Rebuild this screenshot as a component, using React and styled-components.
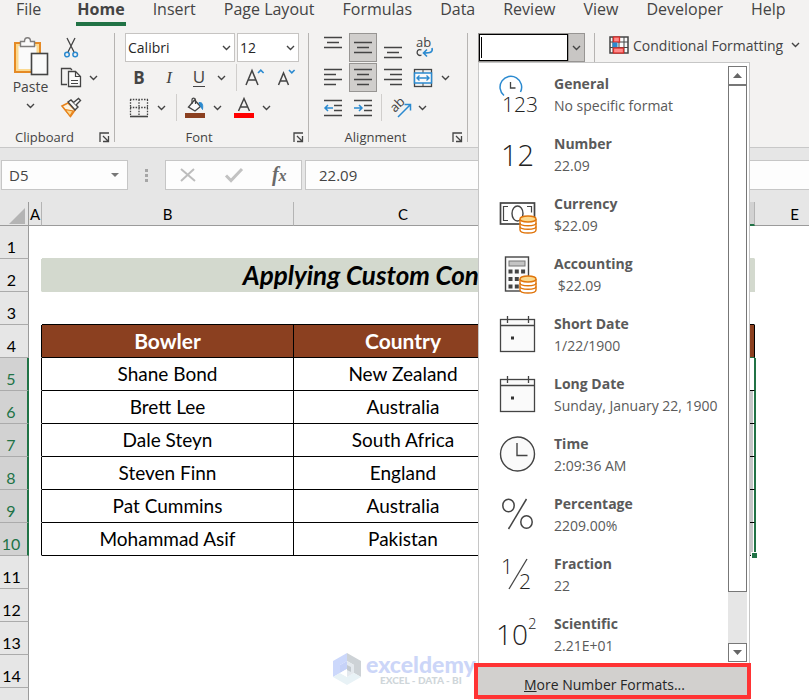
import React from 'react'

import styled, { createGlobalStyle } from 'styled-components'


const ui = `'Open Sans', 'Noto Sans', sans-serif`
const sheet = `Lato, 'Liberation Sans', sans-serif`

const ink = '#444444'
const blue = '#2b8ad0'
const green = '#217346'
const brown = '#8b4020'
const sage = '#d3d9ce'


const tabs = ['File', 'Home', 'Insert', 'Page Layout', 'Formulas', 'Data', 'Review', 'View', 'Developer', 'Help']

const columns = [
    { name: 'A', width: 13 },
    { name: 'B', width: 252 },
    { name: 'C', width: 219 },
    { name: 'D', width: 242, selected: true },
    { name: 'E', width: 80 },
    { name: 'F', width: 80 },
    { name: 'G', width: 80 },
    { name: 'H', width: 80 },
    { name: 'I', width: 80 },
    { name: 'J', width: 80 },
    { name: 'K', width: 80 },
    { name: 'L', width: 80 },
]

const bowlers = [
    ['Shane Bond', 'New Zealand'],
    ['Brett Lee', 'Australia'],
    ['Dale Steyn', 'South Africa'],
    ['Steven Finn', 'England'],
    ['Pat Cummins', 'Australia'],
    ['Mohammad Asif', 'Pakistan'],
]

const lastRows = [11, 12, 13, 14, 15, 16, 17, 18, 19, 20]


const GlobalStyle = createGlobalStyle`
    *, *::before, *::after {
        box-sizing: border-box;
    }

    body {
        margin: 0;
        background: #ffffff;
    }

    button, input, select {
        font: inherit;
        color: inherit;
        margin: 0;
        padding: 0;
        border: 0;
        border-radius: 0;
        background: transparent;
        outline: none;
    }

    svg {
        display: block;
        flex: none;
        overflow: visible;
    }
`

const Window = styled.div`
    display: flex;
    flex-direction: column;
    height: 100vh;
    overflow: hidden;
    font-family: ${ ui };
    font-size: 14px;
    color: ${ ink };
`

const Ribbon = styled.header`
    flex: none;
    background: #f3f2f1;
    border-bottom: 1px solid #c8c8c8;
`

const Tabs = styled.nav`
    display: flex;
    padding-left: 2px;
    margin-bottom: 7px;
`

const Tab = styled.a`
    position: relative;
    padding: 0 14px;
    height: 26px;
    font-size: 16px;
    line-height: 18px;
    white-space: nowrap;
    text-decoration: none;
    color: ${ ink };
    font-weight: ${ props => props.$active ? 700 : 400 };

    &:first-child {
        margin-right: 8px;
    }

    &::after {
        content: '';
        position: absolute;
        left: 13px;
        right: 13px;
        bottom: 0;
        height: 4px;
        background: ${ props => props.$active ? green : 'transparent' };
    }
`

const Groups = styled.div`
    display: flex;
    align-items: flex-start;
`

const Group = styled.section`
    display: flex;
    flex: none;
    flex-direction: column;
    width: ${ props => props.$width }px;
    height: 114px;
    padding: 0 4px 0 10px;
`

const GroupRow = styled.div`
    display: flex;
    gap: ${ props => props.$gap || 0 }px;
    height: 30px;
`

const GroupFooter = styled.footer`
    display: flex;
    align-items: center;
    margin: auto 0 0 -10px;
    height: 20px;
    font-size: 13px;

    span {
        flex: 1;
        text-align: center;
        padding-right: 10px;
    }
`

const Separator = styled.div`
    flex: none;
    width: 1px;
    height: 109px;
    background: #b6b4b2;
`

const Bar = styled.div`
    flex: none;
    width: 1px;
    height: 27px;
    margin: 1px 4px 0 ${ props => props.$before || 4 }px;
    background: #d0cecc;
`

const Tool = styled.button`
    display: flex;
    flex: none;
    align-items: center;
    justify-content: center;
    width: 28px;
    height: 29px;
    background: ${ props => props.$on ? '#d0cecc' : 'transparent' };
    border: 1px solid ${ props => props.$on ? '#979593' : 'transparent' };
`

const Arrow = styled.button`
    display: flex;
    flex: none;
    align-items: center;
    justify-content: center;
    width: 16px;
    height: 29px;
`

const Split = styled.div`
    display: flex;
    margin-right: 5px;
`

const Letter = styled.span`
    font-size: 17px;
    line-height: 18px;
    font-weight: ${ props => props.$bold ? 700 : 400 };
    font-family: ${ props => props.$italic ? `'Liberation Serif', serif` : 'inherit' };
    font-style: ${ props => props.$italic ? 'italic' : 'normal' };
    border-bottom: ${ props => props.$under ? `1px solid ${ ink }` : 0 };
`

const Picker = styled.label`
    display: grid;
    align-items: center;
    width: ${ props => props.$width }px;
    height: 29px;
    background: #ffffff;
    border: 1px solid #c6c4c2;
    color: #262626;

    select, svg {
        grid-area: 1 / 1;
    }

    select {
        appearance: none;
        width: 100%;
        height: 27px;
        padding-left: 2px;
    }

    svg {
        justify-self: end;
        margin-right: 3px;
        pointer-events: none;
    }
`

const Clipboard = styled.div`
    display: flex;
    gap: 6px;
`

const PasteButton = styled.button`
    display: flex;
    flex-direction: column;
    align-items: center;
    width: 41px;
    height: 90px;
    padding-top: 4px;
    font-size: 14px;

    span {
        line-height: 22px;
        margin-bottom: 5px;
    }
`

const Combo = styled.div`
    position: relative;
    display: flex;
    width: 107px;
    height: 29px;
    border: 1px solid #979593;
`

const ComboInput = styled.input`
    flex: 1;
    min-width: 0;
    border: 1px solid #000000;
    background: linear-gradient(#000000, #000000) 1px 2px / 1px 21px no-repeat #ffffff;
`

const ComboButton = styled.button`
    display: flex;
    align-items: center;
    justify-content: center;
    width: 16px;
    background: #c8c6c4;
    border-left: 1px solid #979593;
`

const Styles = styled.button`
    display: flex;
    align-items: center;
    height: 24px;
    margin-left: 14px;
    font-size: 14px;
    white-space: nowrap;

    span {
        margin: 0 8px 0 4px;
    }
`

const Menu = styled.div`
    position: absolute;
    z-index: 2;
    top: 28px;
    left: -1px;
    width: 272px;
    background: #ffffff;
    border: 1px solid #c6c6c6;
    color: #5a5a5a;
`

const MenuBody = styled.div`
    display: flex;
    justify-content: space-between;
    height: 600px;
    padding: 2px 2px 0 0;
    overflow: hidden;
`

const MenuList = styled.ul`
    list-style: none;
    margin: 0;
    padding: 0;
`

const Format = styled.button`
    display: flex;
    align-items: center;
    gap: 17px;
    height: 60px;
    padding-left: 20px;
    text-align: left;
    white-space: pre;
    line-height: 22px;

    b, span {
        display: block;
    }
`

const Scroll = styled.div`
    display: flex;
    flex-direction: column;
    width: 19px;
    height: 596px;
    margin-top: 1px;
    background: #e6e6e6;
`

const ScrollButton = styled.button`
    display: flex;
    align-items: center;
    justify-content: center;
    height: 19px;
    background: #ffffff;
    border: 1px solid #777777;
`

const Thumb = styled.div`
    height: 507px;
    margin-bottom: auto;
    background: #ffffff;
    border: 1px solid #777777;
`

const MoreFormats = styled.button`
    display: block;
    width: 277px;
    height: 36px;
    margin-left: -5px;
    padding: 7px 0 0 46px;
    border: 4px solid #ff3334;
    background: #d2d0ce;
    color: #262626;
    text-align: left;
    line-height: 20px;
`

const FormulaBar = styled.div`
    display: flex;
    flex: none;
    align-items: center;
    padding: 12px 0 12px 1px;
    background: #e6e6e6;
    font-size: 15px;
`

const NameBox = styled.label`
    display: flex;
    align-items: center;
    width: 127px;
    height: 30px;
    padding: 0 8px 0 7px;
    background: #fdfdfd;
    border: 1px solid #c6c6c6;

    input {
        flex: 1;
        min-width: 0;
    }
`

const Dots = styled.div`
    display: grid;
    gap: 2px;
    margin: 0 17px;

    i {
        width: 3px;
        height: 3px;
        background: #a6a6a6;
    }
`

const FormulaTools = styled.div`
    display: flex;
    align-items: center;
    justify-content: space-around;
    width: 137px;
    height: 30px;
    margin-right: 3px;
    background: #fdfdfd;
    border: 1px solid #c6c6c6;
`

const FormulaInput = styled.input`
    flex: 1;
    min-width: 0;
    height: 30px;
    padding-left: 13px;
    background: #fdfdfd;
    border: 1px solid #c6c6c6;
    border-right: 0;
`

const Fx = styled.span`
    font: italic 700 20px/24px 'Liberation Serif', serif;
    color: #6a6a6a;

    small {
        font-size: 16px;
    }
`

const SheetArea = styled.main`
    position: relative;
    flex: 1;
    min-height: 0;
    overflow: hidden;
    background: #ffffff;
`

const Grid = styled.table`
    table-layout: fixed;
    width: 0;
    border-collapse: separate;
    border-spacing: 0;
    font-family: ${ sheet };
    color: #000000;

    th, td {
        padding: 0;
        overflow: hidden;
        white-space: nowrap;
    }
`

const Corner = styled.th`
    background: #e6e6e6;
    border-right: 1px solid #9b9b9b;
    border-bottom: 1px solid #9b9b9b;

    svg {
        margin: 5px 0 0 9px;
    }
`

const ColumnHead = styled.th`
    height: 24px;
    font-size: 15px;
    font-weight: 400;
    background: ${ props => props.$selected ? '#d2d2d2' : '#e6e6e6' };
    border-right: 1px solid #b4b4b4;
    border-bottom: ${ props => props.$selected ? `2px solid ${ green }` : '1px solid #9b9b9b' };
`

const RowHead = styled.th`
    height: 33px;
    font-size: 16px;
    font-weight: 400;
    line-height: 20px;
    vertical-align: bottom;
    color: ${ props => props.$selected ? green : '#000000' };
    background: ${ props => props.$selected ? '#d2d2d2' : '#e6e6e6' };
    border-right: ${ props => props.$selected ? `2px solid ${ green }` : '1px solid #9b9b9b' };
    border-bottom: 1px solid #ababab;

    && {
        padding: 0 5px 1px 0;
    }
`

const Cell = styled.td`
    font-size: 19px;
    line-height: 24px;
    text-align: center;
    border-right: 1px solid ${ props => props.$right || 'transparent' };
    border-bottom: 1px solid ${ props => props.$bottom || 'transparent' };
`

const TitleCell = styled(Cell)`
    font-size: 26px;
    font-style: italic;
    font-weight: 700;
    background: ${ sage };
`

const HeadCell = styled(Cell)`
    font-size: 21px;
    font-weight: 700;
    color: #ffffff;
    background: ${ brown };
`

const PickedCell = styled(Cell)`
    position: relative;
    background: ${ props => props.$active ? '#ffffff' : '#c6c6c8' };
    border-right: 1px solid ${ green };
    box-shadow: 1px 0 ${ green }, inset -1px 0 #ffffff;

    && {
        overflow: visible;
    }
`

const Handle = styled.i`
    position: absolute;
    right: -4px;
    bottom: -4px;
    width: 7px;
    height: 7px;
    background: ${ green };
    border: 1px solid #ffffff;
`

const Watermark = styled.div`
    position: absolute;
    left: 333px;
    top: 451px;
    display: flex;
    gap: 5px;
    font-family: Lato, sans-serif;
    font-weight: 900;
    text-align: center;

    b {
        display: block;
        font-size: 23px;
        line-height: 22px;
        color: #ccd6f8;
    }

    small {
        display: block;
        font-size: 10px;
        font-weight: 900;
        line-height: 10px;
        color: #cfd6da;
    }
`


const Svg = ({ w, h, children }) => (
    <svg width={ w } height={ h } viewBox={ `0 0 ${ w } ${ h }` } fill="none" stroke={ ink } aria-hidden="true">
        { children }
    </svg>
)

const Chevron = () => <Svg w={ 9 } h={ 6 }><path d="M1 1l3.500 3.500L8 1" strokeWidth="1.400" /></Svg>

const Drop = ({ label }) => <Arrow aria-label={ `${ label } options` }><Chevron /></Arrow>

const PasteIcon = () => (
    <Svg w={ 36 } h={ 39 }>
        <rect x="2" y="6" width="25" height="29" fill="#fbd990" stroke="#e58a25" strokeWidth="2" />
        <rect x="5.500" y="9" width="18" height="23" fill="#fafafa" stroke="none" />
        <path d="M7.500 9.500v-5h4c0-5 6-5 6 0h4v5z" fill="#fafafa" stroke="#7f7d7c" strokeWidth="1.400" />
        <rect x="18.500" y="16.500" width="16" height="21" fill="#fafafa" strokeWidth="1.600" />
    </Svg>
)

const CutIcon = () => (
    <Svg w={ 20 } h={ 22 }>
        <path d="M6 1l7 14M14 1L7 15" strokeWidth="1.300" />
        <circle cx="6" cy="17.500" r="2.300" stroke={ blue } strokeWidth="1.500" />
        <circle cx="14.200" cy="17.500" r="2.300" stroke={ blue } strokeWidth="1.500" />
    </Svg>
)

const CopyIcon = () => (
    <Svg w={ 22 } h={ 21 }>
        <path d="M7 17.500H1.500v-16h9l1.500 1.500" strokeWidth="1.300" />
        <path d="M8.500 4.500h7l5 5v10h-12z" fill="#fafafa" strokeWidth="1.300" />
        <path d="M15.500 4.500v5h5M11 13.500h7M11 16.500h7" strokeWidth="1.200" />
    </Svg>
)

const BrushIcon = () => (
    <Svg w={ 22 } h={ 21 }>
        <path d="M2 9l6-3 7 7-4.500 6.500z" fill="#fdf3e0" stroke="#e8831c" strokeWidth="1.600" />
        <path d="M5 12.500l8 1.500-3 5z" fill="#fbd990" stroke="#e8831c" strokeWidth="1.200" />
        <path d="M8 5l3-2 7 7-3 3z" fill="#fafafa" strokeWidth="1.400" />
        <path d="M13.500 5.500l5-4 2 2-4.500 4.500" fill="#fafafa" strokeWidth="1.400" />
    </Svg>
)

const Launcher = () => (
    <Svg w={ 11 } h={ 11 }>
        <path d="M1 10V1h9M4 4l5.500 5.500M9.500 4v5.500H4" strokeWidth="1.300" />
    </Svg>
)

const BordersIcon = () => (
    <Svg w={ 20 } h={ 20 }>
        <path d="M1.500 1.500v16M10 1.500v16M18.500 1.500v16M1 1.500h18M1 9.500h18" strokeWidth="1.300" strokeDasharray="1.500 1.300" />
        <path d="M1 18.500h18" strokeWidth="1.600" />
    </Svg>
)

const FillIcon = () => (
    <Svg w={ 20 } h={ 21 }>
        <path d="M9.500 3l6 6.500-5.500 4.500-6.500-4z" fill="#fafafa" strokeWidth="1.400" />
        <path d="M7 7V3c0-2.600 3.500-2.600 3.500 0v4" strokeWidth="1.200" />
        <path d="M14 5.500c4-.5 4 3 3.500 7l-2-3.500z" fill={ blue } stroke={ blue } />
        <rect y="16" width="20" height="5" fill={ brown } stroke="none" />
    </Svg>
)

const FontColorIcon = () => (
    <Svg w={ 20 } h={ 21 }>
        <path d="M4.500 14L10 1.500 15.500 14M6.500 10h7" strokeWidth="1.500" />
        <rect y="16" width="20" height="5" fill="#ff0000" stroke="none" />
    </Svg>
)

const GrowIcon = ({ small }) => (
    <Svg w={ 20 } h={ 20 }>
        <path d={ small ? 'M1.500 17L6.500 5l5 12M3 13h7' : 'M1 17L7 2.500 13 17M3 12h8' } strokeWidth="1.500" />
        <path d={ small ? 'M12 2l2.800 2.800L17.600 2' : 'M13 5l2.800-2.800L18.600 5' } stroke={ blue } strokeWidth="1.600" />
    </Svg>
)

const lineSets = {
    top: 'M0 2h18M3 7h12M0 12h18',
    left: 'M0 2.500h18M0 7.500h12M0 12.500h18M0 17.500h12',
    center: 'M0 2.500h18M3 7.500h12M0 12.500h18M3 17.500h12',
    right: 'M0 2.500h18M6 7.500h12M0 12.500h18M6 17.500h12',
    upper: 'M0 .5h18M3 5.500h12M0 10.500h18',
    middle: 'M0 5.500h18M3 10.500h12M0 15.500h18',
    lower: 'M0 10.500h18M3 15.500h12M0 20.500h18',
}

const LinesIcon = ({ kind }) => <Svg w={ 18 } h={ 21 }><path d={ lineSets[kind] } strokeWidth="1.300" /></Svg>

const IndentIcon = ({ out }) => (
    <Svg w={ 18 } h={ 18 }>
        <path d="M0 1.500h18M10 6.500h8M10 11.500h8M0 16.500h18" strokeWidth="1.400" />
        <path d={ out ? 'M9 9H1M4 6L1 9l3 3' : 'M0 9h8M5 6l3 3-3 3' } stroke={ blue } strokeWidth="1.500" />
    </Svg>
)

const WrapIcon = () => (
    <svg width="20" height="22" viewBox="0 0 20 22" fill="none" aria-hidden="true">
        <text x="3" y="10" fontSize="13" fill={ ink }>ab</text>
        <path d="M8.500 13c-5-2-6 5-1.500 5.500l1.500-.5" stroke={ ink } strokeWidth="1.300" />
        <path d="M19 11c1 4-1 5-8 5M14 12.500L10.500 16l3.500 3.500" stroke={ blue } strokeWidth="1.600" />
    </svg>
)

const MergeIcon = () => (
    <Svg w={ 20 } h={ 20 }>
        <rect x="1.500" y="1.500" width="17" height="17" strokeWidth="1.300" />
        <path d="M10 1v4M10 15v4" />
        <rect x="1.500" y="5" width="17" height="10" fill="#fafafa" stroke={ blue } strokeWidth="1.500" />
        <path d="M4 10h12M6.500 7.500L4 10l2.500 2.500M13.500 7.500L16 10l-2.500 2.500" stroke={ blue } strokeWidth="1.400" />
    </Svg>
)

const RotateIcon = () => (
    <svg width="22" height="22" viewBox="0 0 22 22" fill="none" aria-hidden="true">
        <text x="6" y="16" fontSize="13" fill={ ink } transform="rotate(-45 6 16)">ab</text>
        <path d="M9 20L21 8M15.500 7.500H21.500V13.500" stroke={ blue } strokeWidth="1.500" />
    </svg>
)

const ConditionalIcon = () => (
    <Svg w={ 20 } h={ 18 }>
        <rect x="1" y="1" width="18" height="16" fill="#fafafa" strokeWidth="1.500" />
        <path d="M4 1v16M10 1v16M15 1v16M1 6h18M1 11.500h18" />
        <rect x="4.500" y="1" width="6" height="5" fill="#ff8a8a" stroke="#d9302c" strokeWidth="1.300" />
        <rect x="3.500" y="6.500" width="5" height="5" fill={ blue } stroke="none" />
        <rect x="4.500" y="12" width="10" height="5" fill="#ff8a8a" stroke="#d9302c" strokeWidth="1.300" />
    </Svg>
)

const Coins = ({ x, y }) => (
    <g transform={ `translate(${ x } ${ y })` } stroke="#e0750c" strokeWidth="1.400">
        <path d="M1 4v11c0 4 16 4 16 0V4" fill="#ffffff" />
        <path d="M1 8c0 3.600 16 3.600 16 0M1 11.500c0 3.600 16 3.600 16 0" />
        <ellipse cx="9" cy="4" rx="8" ry="3" fill="#fbd98d" />
    </g>
)

// numerals stay as text so they follow the interface font
const Num = ({ x, y, size, children }) => (
    <text x={ x } y={ y } fontSize={ size } fontWeight="300" fill="#222222" stroke="none">{ children }</text>
)

const GeneralIcon = () => (
    <Svg w={ 38 } h={ 40 }>
        <path d="M5 20.500A10.800 10.800 0 1 1 21.500 17" stroke={ blue } strokeWidth="1.500" />
        <path d="M11.500 7v6h5" strokeWidth="1.300" />
        <Num x="3" y="37" size="21">123</Num>
    </Svg>
)

const NumberIcon = () => <Svg w={ 38 } h={ 40 }><Num x="2" y="31" size="29">12</Num></Svg>

const CurrencyIcon = () => (
    <Svg w={ 38 } h={ 40 }>
        <rect x="1.500" y="8" width="34" height="21" strokeWidth="1.700" />
        <path d="M9 11.500H4.500v14H9M28 11.500h4.500v6" strokeWidth="1.200" />
        <ellipse cx="18.500" cy="18.500" rx="5.500" ry="7.500" strokeWidth="1.400" />
        <Coins x="20" y="20" />
    </Svg>
)

const AccountingIcon = () => (
    <Svg w={ 38 } h={ 40 }>
        <rect x="6.500" y="2" width="23" height="34" fill="#fafafa" strokeWidth="1.400" />
        <rect x="10" y="6" width="16" height="5" fill="#c4c4c4" stroke="#777777" />
        <path d="M9.500 16.500h17M9.500 24h11M9.500 31.500h11" strokeWidth="4" strokeDasharray="4 2.300" />
        <Coins x="20" y="20" />
    </Svg>
)

const CalendarIcon = () => (
    <Svg w={ 38 } h={ 40 }>
        <rect x="1.500" y="4.500" width="34" height="32" fill="#fafafa" strokeWidth="1.300" />
        <path d="M1 10.500h35M8.500 1v7M29.500 1v7" strokeWidth="1.300" />
        <rect x="12" y="21.500" width="3" height="3" fill="#333333" stroke="none" />
    </Svg>
)

const TimeIcon = () => (
    <Svg w={ 38 } h={ 40 }>
        <circle cx="18.500" cy="19" r="17" fill="#fafafa" strokeWidth="1.400" />
        <path d="M18 8v12.500h10.500" strokeWidth="1.400" />
    </Svg>
)

const PercentIcon = () => (
    <Svg w={ 38 } h={ 40 }>
        <ellipse cx="9.500" cy="10.500" rx="5.700" ry="6.300" strokeWidth="1.500" />
        <ellipse cx="27.500" cy="27" rx="5.700" ry="6.300" strokeWidth="1.500" />
        <path d="M27.500 4L9.500 34" strokeWidth="1.500" />
    </Svg>
)

const FractionIcon = () => (
    <Svg w={ 38 } h={ 40 }>
        <Num x="2" y="19" size="21">1</Num>
        <Num x="20" y="34" size="21">2</Num>
        <path d="M28 4L10 34" strokeWidth="1.300" />
    </Svg>
)

const ScientificIcon = () => (
    <Svg w={ 38 } h={ 40 }>
        <Num x="-3" y="30" size="28">10</Num>
        <Num x="29" y="14" size="15">2</Num>
    </Svg>
)

const Logo = () => (
    <svg width="28" height="32" viewBox="0 0 28 32" aria-hidden="true">
        <path d="M14 0L0 8v16l7-4v-8l7-4z" fill="#ccd8fb" />
        <path d="M14 0l14 8v16l-7-4v-8l-7-4z" fill="#cdd2d6" />
        <path d="M0 24l14 8 14-8-7-4-7 4-7-4z" fill="#e8f2f6" />
        <path d="M14 8l7 4v8l-7 4z" fill="#e4e9ee" />
        <path d="M14 8l-7 4v8l7-4z" fill="#c6d2f8" />
        <path d="M14 12l4 2v5l-4-2z" fill="#c3c9ce" />
        <path d="M7 20l7-4v8z" fill="#ffffff" />
    </svg>
)

const formats = [
    ['General', 'No specific format', GeneralIcon],
    ['Number', '22.09', NumberIcon],
    ['Currency', '$22.09', CurrencyIcon],
    ['Accounting', ' $22.09', AccountingIcon],
    ['Short Date', '1/22/1900', CalendarIcon],
    ['Long Date', 'Sunday, January 22, 1900', CalendarIcon],
    ['Time', '2:09:36 AM', TimeIcon],
    ['Percentage', '2209.00%', PercentIcon],
    ['Fraction', '22', FractionIcon],
    ['Scientific', '2.21E+01', ScientificIcon],
]


const Footer = ({ name }) => (
    <GroupFooter>
        <span>{ name }</span>
        <button aria-label={ `${ name } settings` }><Launcher /></button>
    </GroupFooter>
)

const ClipboardGroup = () => (
    <Group $width={ 114 }>
        <Clipboard>
            <PasteButton>
                <PasteIcon />
                <span>Paste</span>
                <Chevron />
            </PasteButton>
            <div>
                <GroupRow><Tool aria-label="Cut"><CutIcon /></Tool></GroupRow>
                <GroupRow><Tool aria-label="Copy"><CopyIcon /></Tool><Drop label="Copy" /></GroupRow>
                <GroupRow><Tool aria-label="Format Painter"><BrushIcon /></Tool></GroupRow>
            </div>
        </Clipboard>
        <Footer name="Clipboard" />
    </Group>
)

const FontGroup = () => (
    <Group $width={ 193 }>
        <GroupRow $gap={ 2 }>
            <Picker $width={ 110 }>
                <select aria-label="Font"><option>Calibri</option></select>
                <Chevron />
            </Picker>
            <Picker $width={ 62 }>
                <select aria-label="Font size"><option>12</option></select>
                <Chevron />
            </Picker>
        </GroupRow>
        <GroupRow>
            <GroupRow $gap={ 2 }>
                <Tool aria-label="Bold"><Letter $bold>B</Letter></Tool>
                <Tool aria-label="Italic"><Letter $italic>I</Letter></Tool>
                <Tool aria-label="Underline"><Letter $under>U</Letter></Tool>
            </GroupRow>
            <Drop label="Underline" />
            <Bar $before={ 7 } />
            <GroupRow $gap={ 4 }>
                <Tool aria-label="Increase font size"><GrowIcon /></Tool>
                <Tool aria-label="Decrease font size"><GrowIcon small /></Tool>
            </GroupRow>
        </GroupRow>
        <GroupRow>
            <Tool aria-label="Borders"><BordersIcon /></Tool>
            <Drop label="Borders" />
            <Bar $before={ 7 } />
            <Split><Tool aria-label="Fill color"><FillIcon /></Tool><Drop label="Fill" /></Split>
            <Split><Tool aria-label="Font color"><FontColorIcon /></Tool><Drop label="Font color" /></Split>
        </GroupRow>
        <Footer name="Font" />
    </Group>
)

const AlignmentGroup = () => (
    <Group $width={ 158 }>
        <GroupRow $gap={ 2 }>
            <Tool aria-label="Top align"><LinesIcon kind="upper" /></Tool>
            <Tool aria-label="Middle align" $on><LinesIcon kind="middle" /></Tool>
            <Tool aria-label="Bottom align"><LinesIcon kind="lower" /></Tool>
            <Tool aria-label="Wrap text"><WrapIcon /></Tool>
        </GroupRow>
        <GroupRow $gap={ 2 }>
            <Tool aria-label="Align left"><LinesIcon kind="left" /></Tool>
            <Tool aria-label="Center" $on><LinesIcon kind="center" /></Tool>
            <Tool aria-label="Align right"><LinesIcon kind="right" /></Tool>
            <Split><Tool aria-label="Merge and center"><MergeIcon /></Tool><Drop label="Merge" /></Split>
        </GroupRow>
        <GroupRow>
            <GroupRow $gap={ 2 }>
                <Tool aria-label="Decrease indent"><IndentIcon out /></Tool>
                <Tool aria-label="Increase indent"><IndentIcon /></Tool>
            </GroupRow>
            <Bar />
            <Split><Tool aria-label="Orientation"><RotateIcon /></Tool><Drop label="Orientation" /></Split>
        </GroupRow>
        <Footer name="Alignment" />
    </Group>
)

const FormatMenu = () => (
    <Menu>
        <MenuBody>
            <MenuList>
                { formats.map(([name, sample, Icon]) => (
                    <li key={ name }>
                        <Format>
                            <Icon />
                            <span><b>{ name }</b><span>{ sample }</span></span>
                        </Format>
                    </li>
                )) }
            </MenuList>
            <Scroll>
                <ScrollButton aria-label="Scroll up"><Svg w={ 9 } h={ 5 }><path d="M0 5l4.500-5L9 5z" fill="#666666" stroke="none" /></Svg></ScrollButton>
                <Thumb />
                <ScrollButton aria-label="Scroll down"><Svg w={ 9 } h={ 5 }><path d="M0 0l4.500 5L9 0z" fill="#666666" stroke="none" /></Svg></ScrollButton>
            </Scroll>
        </MenuBody>
        <MoreFormats><u>M</u>ore Number Formats...</MoreFormats>
    </Menu>
)

const NumberGroup = () => (
    <Group $width={ 126 }>
        <Combo>
            <ComboInput aria-label="Number format" defaultValue="" />
            <ComboButton aria-label="Open number formats"><Chevron /></ComboButton>
            <FormatMenu />
        </Combo>
    </Group>
)

const Formula = () => (
    <FormulaBar>
        <NameBox>
            <input aria-label="Name box" defaultValue="D5" />
            <Svg w={ 8 } h={ 4 }><path d="M0 0l4 4 4-4z" fill="#777777" stroke="none" /></Svg>
        </NameBox>
        <Dots><i /><i /><i /></Dots>
        <FormulaTools>
            <button aria-label="Cancel"><Svg w={ 16 } h={ 14 }><path d="M1 1l14 12M14 1L1 13" stroke="#bdbdbd" strokeWidth="2" /></Svg></button>
            <button aria-label="Enter"><Svg w={ 18 } h={ 14 }><path d="M1 7.500l5 5L17 1" stroke="#c2c2c2" strokeWidth="3" /></Svg></button>
            <button aria-label="Insert function"><Fx>f<small>x</small></Fx></button>
        </FormulaTools>
        <FormulaInput aria-label="Formula" defaultValue="22.09" />
    </FormulaBar>
)

const Rest = () => columns.slice(4).map(({ name }) => <Cell key={ name } />)

const Sheet = () => (
    <Grid>
        <colgroup>
            <col style={ { width: 29 } } />
            { columns.map(({ name, width }) => <col key={ name } style={ { width } } />) }
        </colgroup>
        <thead>
            <tr>
                <Corner aria-label="Select all">
                    <Svg w={ 16 } h={ 16 }><path d="M16 0v16H0z" fill="#b4b4b4" stroke="none" /></Svg>
                </Corner>
                { columns.map(({ name, selected }) => <ColumnHead key={ name } $selected={ selected }>{ name }</ColumnHead>) }
            </tr>
        </thead>
        <tbody>
            <tr>
                <RowHead>1</RowHead>
                <Cell />
                <Cell colSpan={ 3 } $bottom={ sage } />
                <Rest />
            </tr>
            <tr>
                <RowHead>2</RowHead>
                <Cell $right={ sage } />
                <TitleCell colSpan={ 3 } $bottom={ sage }>Applying Custom Conditions</TitleCell>
                <Rest />
            </tr>
            <tr>
                <RowHead>3</RowHead>
                <Cell />
                <Cell colSpan={ 3 } $bottom="#000000" />
                <Rest />
            </tr>
            <tr>
                <RowHead>4</RowHead>
                <Cell $right="#000000" />
                <HeadCell $right="#000000" $bottom="#000000">Bowler</HeadCell>
                <HeadCell $right="#000000" $bottom="#000000">Country</HeadCell>
                <HeadCell $right="#000000" $bottom={ green } />
                <Rest />
            </tr>
            { bowlers.map(([name, country], i) => (
                <tr key={ name }>
                    <RowHead $selected>{ i + 5 }</RowHead>
                    <Cell $right="#000000" />
                    <Cell $right="#000000" $bottom="#000000">{ name }</Cell>
                    <Cell $right="#000000" $bottom="#000000">{ country }</Cell>
                    <PickedCell $active={ i === 0 } $bottom="#000000">
                        { i === bowlers.length - 1 && <Handle /> }
                    </PickedCell>
                    <Rest />
                </tr>
            )) }
            { lastRows.map(row => (
                <tr key={ row }>
                    <RowHead>{ row }</RowHead>
                    <Cell /><Cell /><Cell /><Cell />
                    <Rest />
                </tr>
            )) }
        </tbody>
    </Grid>
)

const App = () => (
    <Window>
        <GlobalStyle />
        <Ribbon>
            <Tabs>
                { tabs.map(name => <Tab key={ name } href="#" $active={ name === 'Home' }>{ name }</Tab>) }
            </Tabs>
            <Groups>
                <ClipboardGroup />
                <Separator />
                <FontGroup />
                <Separator />
                <AlignmentGroup />
                <Separator />
                <NumberGroup />
                <Separator />
                <Styles>
                    <ConditionalIcon />
                    <span>Conditional Formatting</span>
                    <Chevron />
                </Styles>
            </Groups>
        </Ribbon>
        <Formula />
        <SheetArea>
            <Sheet />
            <Watermark>
                <Logo />
                <div>
                    <b>exceldemy</b>
                    <small>EXCEL - DATA - BI</small>
                </div>
            </Watermark>
        </SheetArea>
    </Window>
)

export default App
